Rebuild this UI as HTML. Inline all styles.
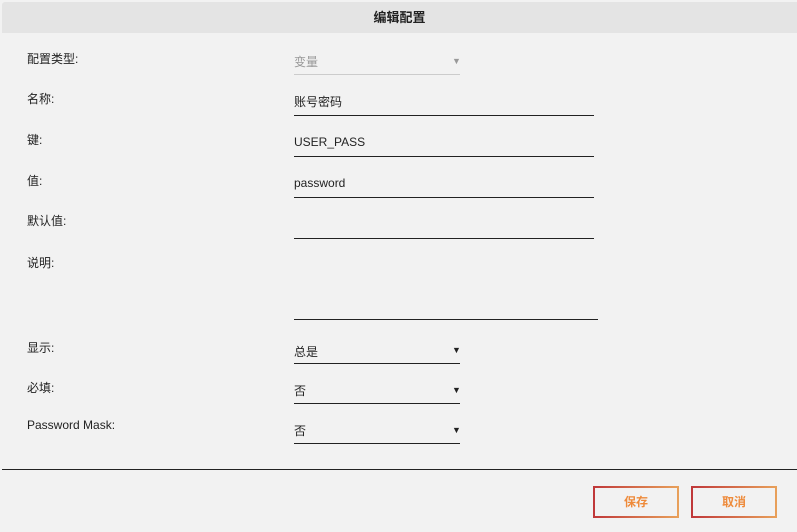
<!DOCTYPE html>
<html><head><meta charset="utf-8"><style>
*{margin:0;padding:0;box-sizing:border-box}
body{width:797px;height:532px;background:#f2f2f2;font-family:"Liberation Sans","Noto Sans CJK SC",sans-serif;font-size:12px;color:#222;position:relative;overflow:hidden}
.hd{position:absolute;left:2px;top:2px;width:795px;height:31px;background:#e4e4e4;border-radius:3px 0 0 0;text-align:center;line-height:31px;font-weight:bold;font-size:13px;color:#222}
.l{position:absolute;left:27px;color:#222}
.t{position:absolute;left:294px;color:#222}
.ln{position:absolute;left:294px;height:1px;background:#222}
.ar{position:absolute;left:452px;font-size:9px;color:#222}
.sep{position:absolute;left:2px;top:469px;width:795px;height:1px;background:#222}
.btn{position:absolute;top:486px;width:86px;height:32px;border:2px solid;border-image:linear-gradient(90deg,#c0383a,#e8a05a) 1;border-radius:3px;text-align:center;line-height:28px;font-weight:bold;color:#ee8a3a;font-size:12px}
</style></head><body>
<div class="hd">编辑配置</div>

<div class="l" style="top:50px">配置类型:</div>
<div class="t" style="top:53px;color:#999">变量</div>
<div class="ar" style="top:56px;color:#999">▼</div>
<div class="ln" style="top:74px;width:166px;background:#ccc"></div>

<div class="l" style="top:90px">名称:</div>
<div class="t" style="top:93px">账号密码</div>
<div class="ln" style="top:115px;width:300px"></div>

<div class="l" style="top:131px">键:</div>
<div class="t" style="top:135px">USER_PASS</div>
<div class="ln" style="top:156px;width:300px"></div>

<div class="l" style="top:172px">值:</div>
<div class="t" style="top:176px">password</div>
<div class="ln" style="top:197px;width:300px"></div>

<div class="l" style="top:212px">默认值:</div>
<div class="ln" style="top:238px;width:300px"></div>

<div class="l" style="top:254px">说明:</div>
<div class="ln" style="top:319px;width:304px"></div>

<div class="l" style="top:339px">显示:</div>
<div class="t" style="top:343px">总是</div>
<div class="ar" style="top:345px">▼</div>
<div class="ln" style="top:363px;width:166px"></div>

<div class="l" style="top:379px">必填:</div>
<div class="t" style="top:382px">否</div>
<div class="ar" style="top:385px">▼</div>
<div class="ln" style="top:403px;width:166px"></div>

<div class="l" style="top:418px">Password Mask:</div>
<div class="t" style="top:422px">否</div>
<div class="ar" style="top:425px">▼</div>
<div class="ln" style="top:443px;width:166px"></div>

<div class="sep"></div>
<div class="btn" style="left:593px">保存</div>
<div class="btn" style="left:691px">取消</div>
</body></html>
